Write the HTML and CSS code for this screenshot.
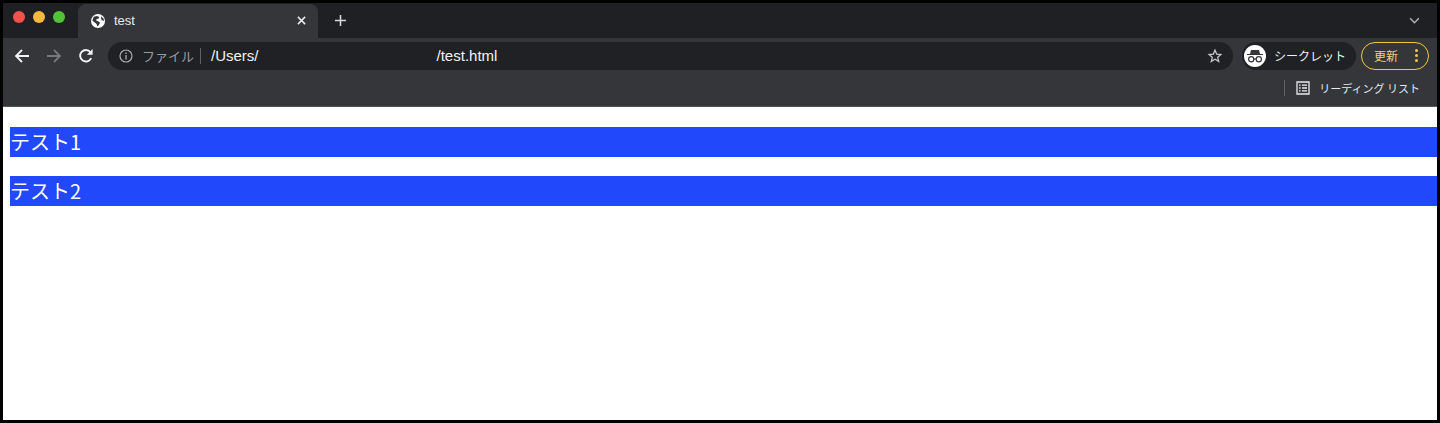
FILE: index.html
```html
<!DOCTYPE html>
<html lang="ja">
<head>
    <meta charset="UTF-8">
    <title>test</title>
    <link rel="stylesheet" href="styles.css">
</head>
<body>
    <div class="window">
        <div class="tabstrip">
            <div class="traffic">
                <span class="dot dot-red"></span>
                <span class="dot dot-yellow"></span>
                <span class="dot dot-green"></span>
            </div>
            <div class="tab">
                <svg class="globe" viewBox="0 0 16 16">
                    <circle cx="8" cy="8" r="8" fill="#fff"/>
                    <path d="M3 3.2 6.8 2.2 9.6 3.4 8.4 5.4 6.4 5.8 6 7.4 8.6 8.6 10.4 10 9 12.6 7.2 14.4 6.4 11.4 4 9.4 1.6 7.6Z" fill="#35363a"/>
                    <path d="M11.4 2.6 14.4 5.4 14.8 8 12.4 7 11.6 5.2Z" fill="#35363a"/>
                </svg>
                <span class="tab-title">test</span>
                <svg class="tab-close" viewBox="0 0 10 10">
                    <path d="M1 1 9 9M9 1 1 9" stroke="#e8eaed" stroke-width="1.7" fill="none"/>
                </svg>
            </div>
            <svg class="new-tab" viewBox="0 0 14 14">
                <path d="M7 1V13M1 7H13" stroke="#d5d7da" stroke-width="1.7" fill="none"/>
            </svg>
            <svg class="tab-menu" viewBox="0 0 12 8">
                <path d="M1 1.5 6 6.5 11 1.5" stroke="#b4b6b9" stroke-width="1.6" fill="none"/>
            </svg>
        </div>

        <div class="toolbar">
            <svg class="nav-icon" viewBox="0 0 16 16">
                <path d="M15 8H2M8 2 2 8 8 14" stroke="#f1f3f4" stroke-width="1.8" fill="none"/>
            </svg>
            <svg class="nav-icon" viewBox="0 0 16 16">
                <path d="M1 8H14M8 2 14 8 8 14" stroke="#76787b" stroke-width="1.8" fill="none"/>
            </svg>
            <svg class="nav-icon" viewBox="0 0 16 16">
                <path d="M13.2 10.2A5.8 5.8 0 1 1 12.4 4" stroke="#f1f3f4" stroke-width="1.9" fill="none"/>
                <path d="M14.6 1V6.8H8.8Z" fill="#f1f3f4"/>
            </svg>
            <div class="omnibox">
                <svg class="info-icon" viewBox="0 0 14 14">
                    <circle cx="7" cy="7" r="6" stroke="#a9abae" stroke-width="1.2" fill="none"/>
                    <path d="M7 6V10.5M7 3.4V5" stroke="#a9abae" stroke-width="1.3" fill="none"/>
                </svg>
                <span class="chip-text">ファイル</span>
                <span class="omni-sep"></span>
                <span class="url">/Users/</span>
                <span class="url url-file">/test.html</span>
                <svg class="star" viewBox="0 0 16 16">
                    <path d="M8 2.2 9.7 6.1 13.9 6.5 10.7 9.3 11.7 13.4 8 11.2 4.3 13.4 5.3 9.3 2.1 6.5 6.3 6.1Z" stroke="#c4c6c9" stroke-width="1.3" fill="none"/>
                </svg>
            </div>
            <div class="incognito">
                <span class="incognito-badge">
                    <svg viewBox="0 0 18 14" width="18" height="14">
                        <path d="M5 1H13L14 5H17V6H1V5H4Z" fill="#35363a"/>
                        <circle cx="5.2" cy="10.2" r="2.6" stroke="#35363a" stroke-width="1.2" fill="none"/>
                        <circle cx="12.8" cy="10.2" r="2.6" stroke="#35363a" stroke-width="1.2" fill="none"/>
                        <path d="M7.8 10H10.2" stroke="#35363a" stroke-width="1.2"/>
                    </svg>
                </span>
                <span>シークレット</span>
            </div>
            <div class="update">
                <span>更新</span>
                <span class="update-dots"><i></i><i></i><i></i></span>
            </div>
        </div>

        <div class="bookmarks">
            <span class="bookmark-sep"></span>
            <svg class="reading-icon" viewBox="0 0 14 14">
                <path d="M1 1H13V13H1Z" stroke="#e8eaed" stroke-width="1.3" fill="none"/>
                <path d="M3 4.2H4.6M6 4.2H11M3 7H4.6M6 7H11M3 9.8H4.6M6 9.8H11" stroke="#e8eaed" stroke-width="1.3" fill="none"/>
            </svg>
            <span class="reading-text">リーディング リスト</span>
        </div>

        <div class="page">
            <div class="row">テスト1</div>
            <div class="row">テスト2</div>
        </div>
    </div>
</body>
</html>
```

FILE: styles.css
```css
* {
    margin: 0;
    padding: 0;
    box-sizing: border-box;
}

html, body {
    height: 423px;
    overflow: hidden;
}

body {
    font-family: "Noto Sans CJK JP", "Liberation Sans", sans-serif;
    background: #000;
}

.window {
    height: 423px;
    border: 3px solid #000;
    display: flex;
    flex-direction: column;
    background: #fff;
}

/* tab strip */
.tabstrip {
    height: 35px;
    background: #1f2023;
    display: flex;
    align-items: flex-end;
}

.traffic {
    width: 75px;
    height: 35px;
    padding: 8px 0 0 10px;
    display: flex;
    gap: 8px;
}

.dot {
    width: 12px;
    height: 12px;
    border-radius: 50%;
}

.dot-red { background: #f2524c; }
.dot-yellow { background: #f9b93c; }
.dot-green { background: #52c336; }

.tab {
    width: 240px;
    height: 34px;
    background: #35363a;
    border-radius: 8px 8px 0 0;
    display: flex;
    align-items: center;
    padding: 0 12px 1px 13px;
    color: #e8eaed;
}

.globe {
    width: 14px;
    height: 14px;
}

.tab-title {
    margin-left: 9px;
    flex: 1;
    font-family: "Liberation Sans", sans-serif;
    font-size: 13px;
}

.tab-close {
    width: 9px;
    height: 9px;
}

.new-tab {
    width: 13px;
    height: 13px;
    margin: 0 0 11px 16px;
}

.tab-menu {
    width: 11px;
    height: 7px;
    margin: 0 17px 14px auto;
}

/* toolbar */
.toolbar {
    height: 35px;
    background: #35363a;
    display: flex;
    align-items: center;
    padding: 0 8px 0 11px;
}

.nav-icon {
    width: 16px;
    height: 16px;
    margin-right: 16px;
}

.nav-icon:nth-of-type(3) {
    margin-right: 14px;
}

.omnibox {
    width: 1125px;
    height: 28px;
    background: #202124;
    border-radius: 14px;
    display: flex;
    align-items: center;
    padding-left: 11px;
    color: #fff;
    font-size: 14px;
}

.info-icon {
    width: 14px;
    height: 14px;
}

.chip-text {
    margin-left: 9px;
    font-size: 13px;
    color: #9a9c9f;
}

.omni-sep {
    width: 1px;
    height: 16px;
    background: #5f6165;
    margin: 0 10px 0 6px;
}

.url {
    font-family: "Liberation Sans", sans-serif;
    font-size: 15px;
    color: #f1f3f4;
}

.url-file {
    margin-left: 178px;
}

.star {
    width: 16px;
    height: 16px;
    margin: 0 10px 0 auto;
}

.incognito {
    width: 114px;
    height: 28px;
    margin-left: 9px;
    background: #202124;
    border-radius: 14px;
    display: flex;
    align-items: center;
    padding-left: 2px;
    gap: 8px;
    color: #f1f3f4;
    font-size: 12px;
}

.incognito-badge {
    width: 22px;
    height: 22px;
    border-radius: 50%;
    background: #fff;
    display: flex;
    align-items: center;
    justify-content: center;
}

.update {
    width: 68px;
    height: 28px;
    margin-left: 5px;
    border: 1px solid #f6c744;
    border-radius: 14px;
    display: flex;
    align-items: center;
    justify-content: space-between;
    padding: 0 10px 0 12px;
    color: #f3cf7a;
    font-size: 12px;
}

.update-dots {
    display: flex;
    flex-direction: column;
    gap: 2px;
}

.update-dots i {
    width: 3px;
    height: 3px;
    border-radius: 50%;
    background: #f6c744;
}

/* bookmark bar */
.bookmarks {
    height: 34px;
    background: #35363a;
    border-bottom: 1px solid #55565a;
    display: flex;
    align-items: center;
    justify-content: flex-end;
    padding: 0 17px 3px 0;
    color: #e8eaed;
    font-size: 11px;
}

.bookmark-sep {
    width: 1px;
    height: 16px;
    background: #5f6165;
    margin-right: 11px;
}

.reading-icon {
    width: 14px;
    height: 14px;
    margin-right: 9px;
}

/* page content */
.page {
    flex: 1;
    background: #fff;
    padding: 19.5px 0 0 7px;
}

.row {
    height: 30px;
    margin-bottom: 19.5px;
    background: #2148fb;
    color: #fff;
    font-family: "Noto Sans CJK JP", sans-serif;
    font-size: 20px;
    line-height: 29px;
}
```
